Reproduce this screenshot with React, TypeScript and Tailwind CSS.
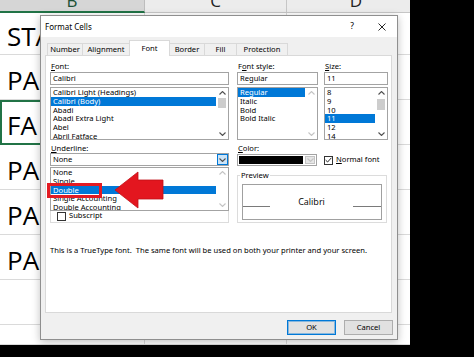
import clsx from 'clsx'

const FONT_LIST = ['Calibri Light (Headings)', 'Calibri (Body)', 'Abadi', 'Abadi Extra Light', 'Abel', 'Abril Fatface']
const STYLE_LIST = ['Regular', 'Italic', 'Bold', 'Bold Italic']
const SIZE_LIST = ['8', '9', '10', '11', '12', '14']
const UNDERLINE_LIST = ['None', 'Single', 'Double', 'Single Accounting', 'Double Accounting']

const SHEET_ROWS = [
  { h: 'h-[42px]', text: 'STA' },
  { h: 'h-[45px]', text: 'PA' },
  { h: 'h-[45px]', text: 'FA', active: true },
  { h: 'h-[45px]', text: 'PA' },
  { h: 'h-[45px]', text: 'PA' },
  { h: 'h-[45px]', text: 'PA' },
  { h: 'h-[45px]', text: '' },
  { h: 'h-[20px]', text: '' },
]

function Chevron({ up, muted }: { up?: boolean; muted?: boolean }) {
  return (
    <svg width="7" height="4" viewBox="0 0 7 4" className={muted ? 'text-[#c4c4c4]' : 'text-[#505050]'}>
      <path d={up ? 'M0.5 3.5 3.5 0.5 6.5 3.5' : 'M0.5 0.5 3.5 3.5 6.5 0.5'} fill="none" stroke="currentColor" strokeWidth="1.1" />
    </svg>
  )
}

function ScrollBar({ thumb, muted }: { thumb?: string; muted?: boolean }) {
  return (
    <div className="flex w-[12px] shrink-0 flex-col">
      <div className="flex h-[10px] items-center justify-center">
        <Chevron up muted={muted} />
      </div>
      {thumb && <div className={clsx('mx-[2px] bg-[#cdcdcd]', thumb)} />}
      <div className="flex-1" />
      <div className="flex h-[10px] items-center justify-center">
        <Chevron muted={muted} />
      </div>
    </div>
  )
}

function ListBox({
  items,
  selected,
  thumb,
  muted,
  className,
}: {
  items: string[]
  selected: number
  thumb?: string
  muted?: boolean
  className?: string
}) {
  return (
    <div className={clsx('flex border border-[#a3a3a3] bg-white', className)}>
      <div className="min-w-0 flex-1 overflow-hidden">
        {items.map((item, i) => (
          <div
            key={item}
            className={clsx(
              'h-[8.8px] whitespace-nowrap pl-[2px] leading-[8.8px]',
              i === selected && 'bg-[#0078d7] text-white',
            )}
          >
            {item}
          </div>
        ))}
      </div>
      <ScrollBar thumb={thumb} muted={muted} />
    </div>
  )
}

function Label({ k, rest, pre }: { k: string; rest: string; pre?: string }) {
  return (
    <div className="h-[10px] whitespace-nowrap pl-[1px] leading-[10px]">
      {pre}
      <span className="underline underline-offset-[1px]">{k}</span>
      {rest}
    </div>
  )
}

function TextBox({ value }: { value: string }) {
  return (
    <div className="mt-[1px] flex h-[13px] items-center border border-[#a3a3a3] bg-white pl-[2px]">{value}</div>
  )
}

function CheckBox({ checked }: { checked?: boolean }) {
  return (
    <span className="flex h-[9px] w-[9px] shrink-0 items-center justify-center border border-[#333] bg-white">
      {checked && (
        <svg width="7" height="6" viewBox="0 0 7 6">
          <path d="M0.6 3.1 2.6 5 6.4 0.8" fill="none" stroke="#222" strokeWidth="1" />
        </svg>
      )}
    </span>
  )
}

function Sheet() {
  return (
    <div className="h-[345px] w-[410px] overflow-hidden bg-white font-['Open_Sans',sans-serif]">
      {/* column headers, cut off at the top of the shot */}
      <div className="flex h-[13px]">
        <div className="flex h-[13px] w-[145px] shrink-0 justify-center overflow-hidden border-r border-b-2 border-r-[#bdbdbd] border-b-[#217346] bg-[#d6d6d6]">
          <span className="-mt-[8px] text-[17px] leading-none text-[#1d5236]">B</span>
        </div>
        <div className="flex h-[13px] w-[142px] shrink-0 justify-center overflow-hidden border-r border-b border-[#c6c6c6] bg-[#ececec]">
          <span className="-mt-[8px] text-[17px] leading-none text-[#222]">C</span>
        </div>
        <div className="flex h-[13px] w-[138px] shrink-0 justify-center overflow-hidden border-b border-[#c6c6c6] bg-[#ececec]">
          <span className="-mt-[8px] text-[17px] leading-none text-[#222]">D</span>
        </div>
      </div>
      {SHEET_ROWS.map((r, i) => (
        <div key={i} className={clsx('flex', r.h)}>
          <div
            className={clsx(
              'flex w-[145px] shrink-0 items-center border-r border-b border-[#dadada] pl-[7px] pt-[6px] text-[26px] text-black',
              r.active && 'relative z-[1] outline-2 -outline-offset-2 outline-[#217346]',
            )}
          >
            {r.text}
          </div>
          <div className="w-[142px] shrink-0 border-r border-b border-[#dadada]" />
          <div className="w-[138px] shrink-0 border-b border-[#dadada]" />
        </div>
      ))}
    </div>
  )
}

function FormatCellsDialog() {
  return (
    <div className="absolute left-[40px] top-[15px] z-10 flex h-[325px] w-[358px] flex-col border border-[#8f8f8f] bg-[#f0f0f0] font-['Noto_Sans',sans-serif] text-[7.6px] text-black shadow-[0_2px_8px_rgba(0,0,0,0.25)]">
      {/* title bar */}
      <div className="flex h-[21px] shrink-0 items-center bg-white pl-[4px]">
        <span className="flex-1 text-[8px]">Format Cells</span>
        <span className="w-[30px] text-center text-[8.5px]">?</span>
        <span className="flex w-[30px] justify-center">
          <svg width="8" height="8" viewBox="0 0 8 8">
            <path d="M0.5 0.5 7.5 7.5M7.5 0.5 0.5 7.5" stroke="#111" strokeWidth="0.9" />
          </svg>
        </span>
      </div>

      {/* tabs */}
      <div className="relative z-10 ml-[6px] mt-[3px] flex h-[16px] items-end">
        <div className="mb-[1px] flex h-[12px] w-[36px] items-center justify-center border border-b-0 border-[#d9d9d9]">Number</div>
        <div className="-ml-px mb-[1px] flex h-[12px] w-[48px] items-center justify-center border border-b-0 border-[#d9d9d9]">Alignment</div>
        <div className="-ml-px flex h-[16px] w-[41px] items-center justify-center border border-b-0 border-[#d9d9d9] bg-white">Font</div>
        <div className="-ml-px mb-[1px] flex h-[12px] w-[36px] items-center justify-center border border-b-0 border-[#d9d9d9]">Border</div>
        <div className="-ml-px mb-[1px] flex h-[12px] w-[33px] items-center justify-center border border-b-0 border-[#d9d9d9]">Fill</div>
        <div className="-ml-px mb-[1px] flex h-[12px] w-[52px] items-center justify-center border border-b-0 border-[#d9d9d9]">Protection</div>
      </div>

      {/* tab page */}
      <div className="-mt-px ml-[4px] h-[258px] w-[347px] border border-[#d9d9d9] bg-white pl-[4px] pt-[5px]">
        <div className="flex">
          <div className="w-[179px]">
            <Label k="F" rest="ont:" />
            <TextBox value="Calibri" />
            <ListBox items={FONT_LIST} selected={1} thumb="h-[10px]" className="mt-[2px] h-[53px]" />
          </div>
          <div className="ml-[8px] w-[81px]">
            <Label pre="F" k="o" rest="nt style:" />
            <TextBox value="Regular" />
            <ListBox items={STYLE_LIST} selected={0} muted className="mt-[2px] h-[53px]" />
          </div>
          <div className="ml-[6px] w-[64px]">
            <Label k="S" rest="ize:" />
            <TextBox value="11" />
            <ListBox items={SIZE_LIST} selected={3} thumb="mt-[1px] h-[11px]" className="mt-[2px] h-[53px]" />
          </div>
        </div>

        <div className="mt-[3px] flex">
          <div className="relative w-[179px]">
            <Label k="U" rest="nderline:" />
            <div className="flex h-[13px] items-center border border-[#a3a3a3] bg-white pl-[2px]">
              <span className="flex-1">None</span>
              <span className="flex h-[11px] w-[11px] items-center justify-center border border-[#0078d7] bg-[#cce4f7]">
                <Chevron />
              </span>
            </div>
            {/* effects group: only its last row shows below the open list */}
            <div className="mt-[4px] h-[53px] border border-[#dcdcdc] pl-[6px] pt-[40px]">
              <div className="flex h-[10px] items-center gap-[3px]">
                <CheckBox />
                <span>Subscript</span>
              </div>
            </div>
            {/* opened underline drop-down */}
            <ListBox
              items={UNDERLINE_LIST}
              selected={2}
              muted
              className="absolute left-0 top-[24px] h-[44px] w-[179px] border-[#7a7a7a]"
            />
          </div>

          <div className="ml-[8px] w-[150px]">
            <Label k="C" rest="olor:" />
            <div className="mt-[1px] flex h-[12px] items-center">
              <div className="flex h-[12px] w-[80px] border border-[#a3a3a3] bg-white p-[1px]">
                <div className="flex-1 bg-black" />
                <div className="ml-[2px] flex w-[10px] items-center justify-center border border-[#c4c4c4] bg-[#e6e6e6]">
                  <Chevron muted />
                </div>
              </div>
              <span className="ml-[7px]">
                <CheckBox checked />
              </span>
              <span className="ml-[3px] whitespace-nowrap">
                <span className="underline underline-offset-[1px]">N</span>ormal font
              </span>
            </div>
            <fieldset className="mt-[4px] border border-[#dcdcdc] pb-[2px]">
              <legend className="ml-[2px] px-[1px] leading-[10px]">Preview</legend>
              <div className="mx-[4px] mt-[4px] flex h-[36px] items-center border border-[#a0a0a0]">
                <div className="mt-[8px] h-px w-[27px] bg-[#7a7a7a]" />
                <div className="flex-1 text-center font-['Open_Sans',sans-serif] text-[9px]">Calibri</div>
                <div className="mt-[8px] h-px w-[28px] bg-[#7a7a7a]" />
              </div>
            </fieldset>
          </div>
        </div>

        <div className="mt-[22px] h-[10px] whitespace-pre leading-[10px]">
          This is a TrueType font.  The same font will be used on both your printer and your screen.
        </div>
      </div>

      {/* buttons */}
      <div className="flex justify-end gap-[8px] pr-[4px] pt-[7px]">
        <button className="flex h-[15px] w-[49px] items-center justify-center border border-[#0078d7] bg-[#e1e1e1] outline outline-1 -outline-offset-2 outline-[#0078d7]/40">
          OK
        </button>
        <button className="flex h-[15px] w-[49px] items-center justify-center border border-[#adadad] bg-[#e1e1e1]">
          Cancel
        </button>
      </div>
    </div>
  )
}

export default function App() {
  return (
    <div className="relative h-[357px] w-[474px] overflow-hidden bg-black">
      <Sheet />
      <FormatCellsDialog />

      {/* red call-out around "Double" and the arrow pointing at it */}
      <div className="absolute left-[47px] top-[183px] z-20 h-[15px] w-[55px] border-[3px] border-[#e31b23]" />
      <svg className="absolute left-[113px] top-[170px] z-20" width="52" height="40" viewBox="0 0 52 40">
        <polygon points="2,20 25,2 25,10 50,10 50,29 25,29 25,38" fill="#e3161f" stroke="#c01018" strokeWidth="0.8" />
      </svg>
    </div>
  )
}
